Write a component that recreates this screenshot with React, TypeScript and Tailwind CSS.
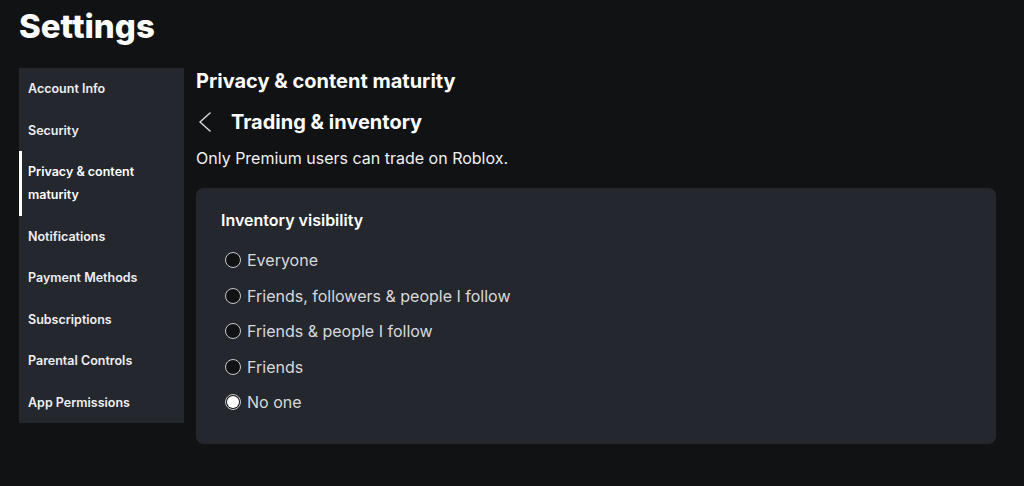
const navItems = [
  "Account Info",
  "Security",
  "Privacy & content maturity",
  "Notifications",
  "Payment Methods",
  "Subscriptions",
  "Parental Controls",
  "App Permissions",
];

const options = [
  "Everyone",
  "Friends, followers & people I follow",
  "Friends & people I follow",
  "Friends",
  "No one",
];

const App = () => {
  const active = "Privacy & content maturity";
  const selected = "No one";
  return (
    <div
      className="w-[1024px] h-[486px] bg-[#111214] text-white overflow-hidden"
      style={{ fontFamily: "Inter, 'Noto Sans', sans-serif" }}
    >
      <div className="pl-[19px] pt-[6px] text-[33px] leading-[40px] font-extrabold">
        Settings
      </div>
      <div className="flex gap-[12px] pl-[19px] pt-[22px]">
        <div className="w-[165px] bg-[#25272e] shrink-0 self-start">
          {navItems.map((item) => (
            <div
              key={item}
              className={
                item == active
                  ? "border-l-[3px] border-white pl-[6px] pr-[20px] py-[9.25px] text-[12.5px] leading-[23px] font-semibold text-white"
                  : "border-l-[3px] border-transparent pl-[6px] pr-[20px] py-[9.25px] text-[12.5px] leading-[23px] font-semibold text-[#eeeff1]"
              }
            >
              {item}
            </div>
          ))}
        </div>
        <div className="w-[800px] flex flex-col">
          <div className="text-[20px] leading-[24px] font-bold mt-[1px]">
            Privacy &amp; content maturity
          </div>
          <div className="flex items-center mt-[17px] h-[24px]">
            <svg
              width="14"
              height="20"
              viewBox="0 0 14 20"
              fill="none"
              stroke="#d0d1d5"
              strokeWidth="1.6"
              strokeLinecap="round"
              strokeLinejoin="round"
              className="ml-[2px]"
            >
              <polyline points="12,1 2,10 12,19" />
            </svg>
            <div className="ml-[19px] text-[20px] leading-[24px] font-bold">
              Trading &amp; inventory
            </div>
          </div>
          <div className="mt-[12px] text-[16px] leading-[24px] text-[#f0f1f3]">
            Only Premium users can trade on Roblox.
          </div>
          <div className="mt-[18px] bg-[#25272e] rounded-[8px] pl-[25px] pt-[21px] pb-[30px]">
            <div className="text-[16px] leading-[22px] font-semibold">
              Inventory visibility
            </div>
            <div className="flex flex-col mt-[17px] gap-[11.5px]">
              {options.map((opt) => (
                <div key={opt} className="flex items-center h-[24px]">
                  {opt == selected ? (
                    <div className="ml-[4px] w-[16px] h-[16px] rounded-full border border-[#c8c9cd] bg-[#111214] flex items-center justify-center">
                      <div className="w-[12px] h-[12px] rounded-full bg-white" />
                    </div>
                  ) : (
                    <div className="ml-[4px] w-[16px] h-[16px] rounded-full border border-[#c8c9cd] bg-[#111214]" />
                  )}
                  <div className="ml-[6px] text-[16px] leading-[24px] text-[#d8d9dd]">
                    {opt}
                  </div>
                </div>
              ))}
            </div>
          </div>
        </div>
      </div>
    </div>
  );
};

export default App;
